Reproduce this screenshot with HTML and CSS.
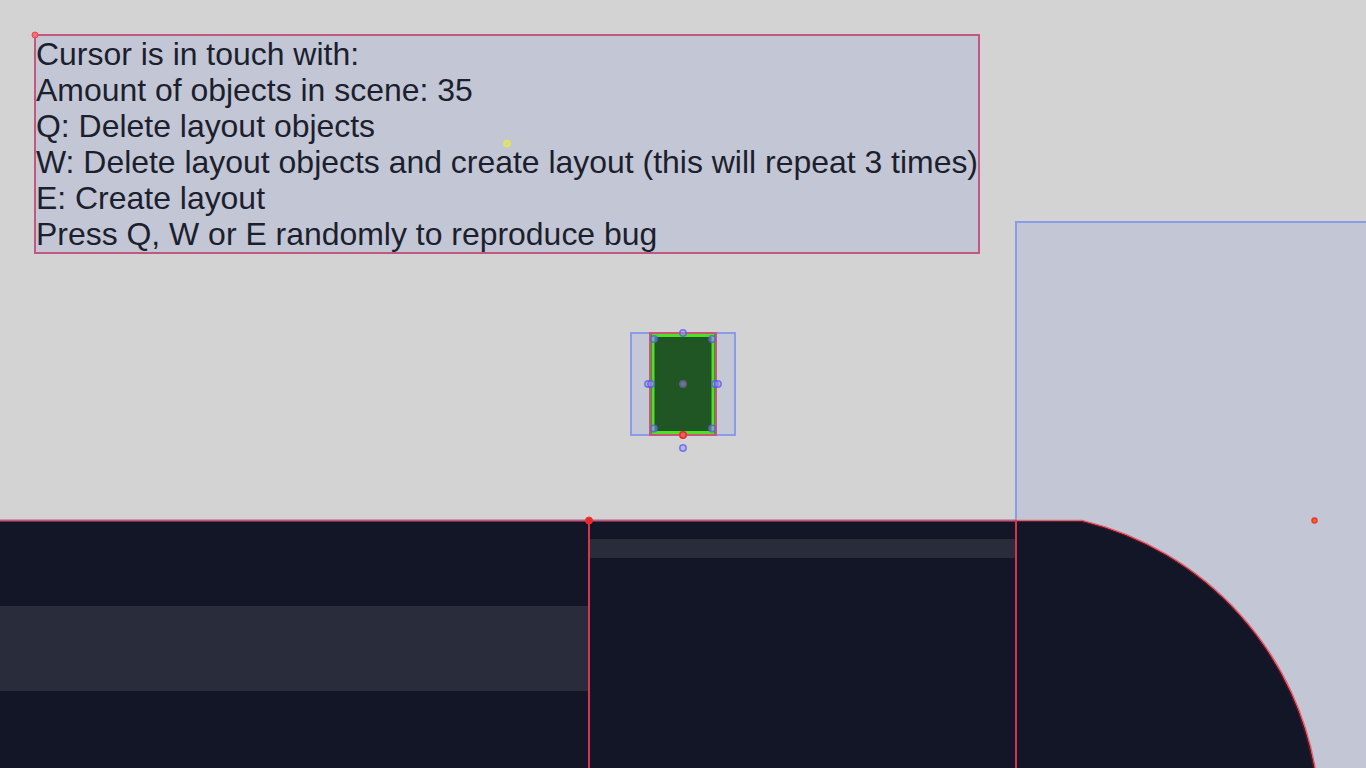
FILE: index.html
```html
<!DOCTYPE html>
<html>
<head>
<meta charset="utf-8">
<link rel="stylesheet" href="styles.css">
</head>
<body>
<div class="scene">
  <div class="panel">
    <p class="line">Cursor is in touch with:</p>
    <p class="line">Amount of objects in scene: 35</p>
    <p class="line">Q: Delete layout objects</p>
    <p class="line">W: Delete layout objects and create layout (this will repeat 3 times)</p>
    <p class="line">E: Create layout</p>
    <p class="line">Press Q, W or E randomly to reproduce bug</p>
  </div>
  <svg class="overlay" width="1366" height="768" viewBox="0 0 1366 768">
    <rect x="1016" y="222" width="360" height="560" fill="#c3c6d5" stroke="#8a9be8" stroke-width="2"/>
    <rect x="0" y="520" width="1016" height="248" fill="#131626"/>
    <rect x="0" y="606" width="588" height="85" fill="#292c3b"/>
    <rect x="590" y="539" width="426" height="19" fill="#292c3b"/>
    <line x1="0" y1="520.5" x2="1016" y2="520.5" stroke="#c0587f" stroke-width="2"/>
    <path d="M1016 520.5 L1082 520.5 A310 310 0 0 1 1317 780 L1016 780 Z" fill="#131626" stroke="#e0606e" stroke-width="1.5"/>
    <path d="M1082 521.5 A309 309 0 0 1 1315.5 780" fill="none" stroke="#7a1020" stroke-width="1"/>
    <line x1="589" y1="520" x2="589" y2="768" stroke="#d6344f" stroke-width="2"/>
    <line x1="1016" y1="520" x2="1016" y2="768" stroke="#d6344f" stroke-width="2"/>
    <circle cx="589" cy="520.5" r="3.5" fill="#e82828" stroke="#f03030" stroke-width="1"/>
    <circle cx="1314.5" cy="520.5" r="2.5" fill="#f05a40" stroke="#f03c1c" stroke-width="1.5"/>
    <circle cx="35" cy="35" r="3" fill="#f07080" stroke="#f04050" stroke-width="1"/>
    <circle cx="507" cy="143.5" r="3" fill="#d8d890" stroke="#e8e848" stroke-width="1.5"/>
    <rect x="631" y="333" width="104" height="102" fill="rgba(195,198,213,0.9)" stroke="#8a9be8" stroke-width="2"/>
    <rect x="650" y="333" width="66" height="102" fill="#1f5624" stroke="#c8587a" stroke-width="2"/>
    <rect x="653" y="335.5" width="60" height="97" fill="#1f5624" stroke="#4ee024" stroke-width="3"/>
    <g fill="rgba(150,150,240,0.5)" stroke="rgba(90,90,240,0.75)" stroke-width="1.5">
      <circle cx="683" cy="333" r="3.2"/>
      <circle cx="654" cy="339" r="3.2"/>
      <circle cx="712" cy="339" r="3.2"/>
      <circle cx="654" cy="428.5" r="3.2"/>
      <circle cx="712" cy="428.5" r="3.2"/>
      <circle cx="648" cy="384" r="3.2"/>
      <circle cx="651" cy="384" r="3.2"/>
      <circle cx="715" cy="384" r="3.2"/>
      <circle cx="718" cy="384" r="3.2"/>
      <circle cx="683" cy="448" r="3.2"/>
    </g>
    <circle cx="683" cy="384" r="3.2" fill="#6f7290" stroke="#5d6088" stroke-width="1.5"/>
    <circle cx="683" cy="435" r="3.2" fill="#e86060" stroke="#f02828" stroke-width="1.5"/>
  </svg>
</div>
</body>
</html>
```
FILE: styles.css
```css
html, body {
  margin: 0;
  padding: 0;
  background: #d3d3d3;
}
.scene {
  position: relative;
  width: 1366px;
  height: 768px;
  overflow: hidden;
  background: #d3d3d3;
}
.panel {
  position: absolute;
  left: 34px;
  top: 34px;
  width: 942px;
  height: 216px;
  border: 2px solid #c0587f;
  background: #c3c6d5;
  font-family: "Liberation Sans", Arial, sans-serif;
  font-size: 31.95px;
  line-height: 36px;
  color: #1c1f2d;
  white-space: nowrap;
}
.line {
  margin: 0;
  padding: 0;
}
.overlay {
  position: absolute;
  left: 0;
  top: 0;
  pointer-events: none;
}
```
